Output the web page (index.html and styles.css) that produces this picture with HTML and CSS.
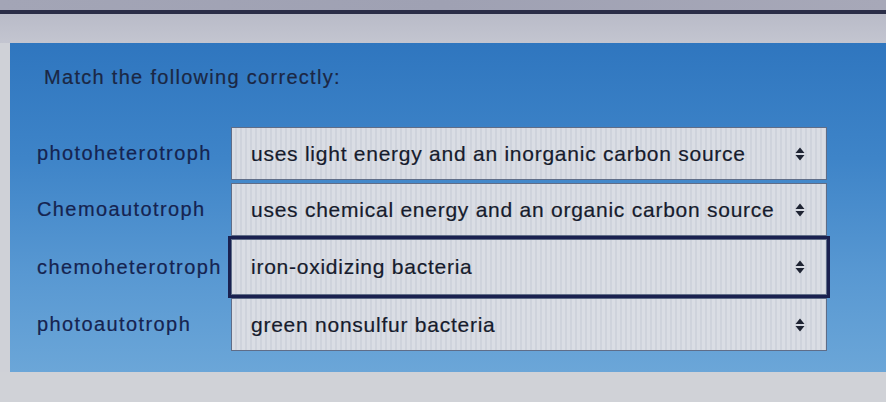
FILE: index.html
```html
<!DOCTYPE html>
<html>
<head>
<meta charset="utf-8">
<link rel="stylesheet" href="styles.css">
</head>
<body>
<div class="topbar"></div>
<div class="rule"></div>
<div class="band"></div>
<div class="panel">
  <div class="heading">Match the following correctly:</div>
  <div class="rows">
    <div class="row">
      <div class="label">photoheterotroph</div>
      <div class="select"><span class="val">uses light energy and an inorganic carbon source</span>
        <svg class="arrow" width="10" height="16" viewBox="0 0 10 16"><path d="M0.5 7 L5 1.5 L9.5 7 Z M0.5 9 L5 14.5 L9.5 9 Z" fill="#1f2433"/></svg></div>
    </div>
    <div class="row">
      <div class="label">Chemoautotroph</div>
      <div class="select"><span class="val">uses chemical energy and an organic carbon source</span>
        <svg class="arrow" width="10" height="16" viewBox="0 0 10 16"><path d="M0.5 7 L5 1.5 L9.5 7 Z M0.5 9 L5 14.5 L9.5 9 Z" fill="#1f2433"/></svg></div>
    </div>
    <div class="row">
      <div class="label">chemoheterotroph</div>
      <div class="select focused"><span class="val">iron-oxidizing bacteria</span>
        <svg class="arrow" width="10" height="16" viewBox="0 0 10 16"><path d="M0.5 7 L5 1.5 L9.5 7 Z M0.5 9 L5 14.5 L9.5 9 Z" fill="#1f2433"/></svg></div>
    </div>
    <div class="row">
      <div class="label">photoautotroph</div>
      <div class="select"><span class="val">green nonsulfur bacteria</span>
        <svg class="arrow" width="10" height="16" viewBox="0 0 10 16"><path d="M0.5 7 L5 1.5 L9.5 7 Z M0.5 9 L5 14.5 L9.5 9 Z" fill="#1f2433"/></svg></div>
    </div>
  </div>
</div>
<div class="footer"></div>
</body>
</html>
```
FILE: styles.css
```css
html, body {
  margin: 0;
  padding: 0;
}
body {
  width: 886px;
  height: 402px;
  overflow: hidden;
  background: #cfd1d7;
  font-family: "Liberation Sans", Arial, sans-serif;
}
.topbar {
  height: 10px;
  background: linear-gradient(to right, #a3a5b6, #9fa1b3 50%, #a7a8b8);
}
.rule {
  height: 4px;
  background: #2a2d47;
}
.band {
  height: 29px;
  background: linear-gradient(to bottom, #b9bbc8, #c3c5d0);
}
.panel {
  margin-left: 10px;
  height: 329px;
  box-sizing: border-box;
  padding: 23px 0 0 26px;
  background: linear-gradient(to bottom, #2f76bf 0%, #3e84c8 35%, #5898d2 70%, #6ba6d8 100%);
}
.heading {
  font-size: 20px;
  line-height: 22px;
  letter-spacing: 1.3px;
  color: #1b2744;
  padding-left: 8px;
  -webkit-text-stroke: 0.2px #1b2744;
}
.rows {
  margin-top: 39px;
  display: flex;
  flex-direction: column;
  gap: 3px;
}
.row {
  display: flex;
  align-items: center;
}
.label {
  width: 195px;
  flex: none;
  font-size: 20px;
  letter-spacing: 1.4px;
  color: #152350;
  padding-left: 1px;
  box-sizing: border-box;
  white-space: nowrap;
  -webkit-text-stroke: 0.2px #152350;
}
.select {
  width: 596px;
  height: 53px;
  box-sizing: border-box;
  border: 1px solid #5f6d88;
  background: repeating-linear-gradient(to right, #dadde4 0px, #dadde4 3px, #cfd3dc 3px, #cfd3dc 5px);
  display: flex;
  align-items: center;
  justify-content: space-between;
  padding: 0 21px 0 19px;
  color: #161b2c;
}
.select.focused {
  box-shadow: 0 0 0 3px #1a2150;
  height: 56px;
}
.val {
  font-size: 21px;
  letter-spacing: 0.75px;
  white-space: nowrap;
  -webkit-text-stroke: 0.2px #161b2c;
}
.arrow {
  flex: none;
}
.footer {
  height: 30px;
  background: #d0d2d7;
}
```
